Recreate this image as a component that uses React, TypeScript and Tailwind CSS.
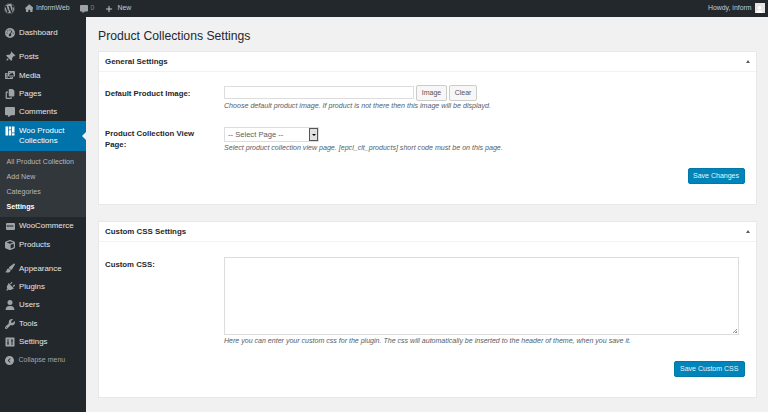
import type { ReactNode } from "react";
import {
  FaWordpress,
  FaHouse,
  FaMessage,
  FaPlus,
  FaGaugeHigh,
  FaThumbtack,
  FaPhotoFilm,
  FaCopy,
  FaCube,
  FaPaintbrush,
  FaPlug,
  FaUser,
  FaWrench,
  FaCircleChevronLeft,
} from "react-icons/fa6";

const MenuItem = ({ icon, label }: { icon: ReactNode; label: string }) => (
  <div className="flex h-[18.4px] items-center text-[7.9px] text-[#e4e5e6]">
    <span className="flex w-[19px] shrink-0 justify-center pl-[1px] text-[10px] text-[#9ea3a8]">{icon}</span>
    <span>{label}</span>
  </div>
);

const SubItem = ({ label, active }: { label: string; active?: boolean }) => (
  <div className={`flex h-[15px] items-center pl-[6.5px] text-[7.1px] ${active ? "font-bold text-white" : "text-[#b4b9be]"}`}>
    {label}
  </div>
);

const CardHeader = ({ title }: { title: string }) => (
  <div className="flex h-[20px] items-center justify-between border-b border-[#f2f2f2] pl-[6px] pr-[6px]">
    <h2 className="text-[7.9px] font-bold text-[#23282d]">{title}</h2>
    <span className="h-0 w-0 border-x-[2.5px] border-b-[3px] border-x-transparent border-b-[#555d66]" />
  </div>
);

const WooIcon = () => (
  <svg viewBox="0 0 20 20" className="h-[10px] w-[10px]" fill="currentColor">
    <path d="M1 1h5v18H1zM7.5 1h5v6h-5zM14 1h5v12h-5zM7.5 8.5h5V19h-5zM14 14.5h5V19h-5z" />
  </svg>
);

const SettingsIcon = () => (
  <svg viewBox="0 0 20 20" className="h-[10px] w-[10px]">
    <rect x="1" y="1" width="18" height="18" rx="1" fill="#9ea3a8" />
    <path d="M6 4v12M14 4v12M4 12h4M12 8h4" stroke="#23282d" strokeWidth="1.8" />
  </svg>
);

const Sidebar = () => (
  <aside className="flex w-[86px] shrink-0 flex-col bg-[#23282d] pt-[7px]">
    <MenuItem icon={<FaGaugeHigh />} label="Dashboard" />
    <div className="h-[5.5px]" />
    <MenuItem icon={<FaThumbtack className="rotate-45" />} label="Posts" />
    <MenuItem icon={<FaPhotoFilm />} label="Media" />
    <MenuItem icon={<FaCopy />} label="Pages" />
    <MenuItem icon={<FaMessage />} label="Comments" />
    <div className="relative flex h-[29.5px] items-start bg-[#0073aa] pt-[5px] text-[7.9px] leading-[9.6px] text-white">
      <span className="flex w-[19px] shrink-0 justify-center pl-[1px]">
        <WooIcon />
      </span>
      <span>
        Woo Product
        <br />
        Collections
      </span>
      <span className="absolute right-0 top-[11px] h-0 w-0 border-y-[4px] border-r-[4px] border-y-transparent border-r-[#f1f1f1]" />
    </div>
    <div className="flex h-[66px] flex-col bg-[#32373c] pt-[3.5px]">
      <SubItem label="All Product Collection" />
      <SubItem label="Add New" />
      <SubItem label="Categories" />
      <SubItem label="Settings" active />
    </div>
    <MenuItem
      icon={<span className="rounded-[1px] bg-[#9ea3a8] px-[1px] text-[3.5px] font-bold leading-[7px] text-[#23282d]">woo</span>}
      label="WooCommerce"
    />
    <MenuItem icon={<FaCube />} label="Products" />
    <div className="h-[5.5px]" />
    <MenuItem icon={<FaPaintbrush />} label="Appearance" />
    <MenuItem icon={<FaPlug className="rotate-45" />} label="Plugins" />
    <MenuItem icon={<FaUser />} label="Users" />
    <MenuItem icon={<FaWrench />} label="Tools" />
    <MenuItem icon={<SettingsIcon />} label="Settings" />
    <div className="flex h-[18.4px] items-center text-[7px] text-[#a0a5aa]">
      <span className="flex w-[18.5px] shrink-0 justify-center pl-[1px] text-[9px] text-[#a0a5aa]">
        <FaCircleChevronLeft />
      </span>
      <span>Collapse menu</span>
    </div>
  </aside>
);

const TopBar = () => (
  <header className="flex h-[17px] shrink-0 items-center justify-between bg-[#23282d] pl-[3.5px] pr-[3.5px] text-[6.9px] text-[#c5c9cd]">
    <div className="flex items-center">
      <FaWordpress className="text-[11px] text-[#9ea3a8]" />
      <FaHouse className="ml-[10px] text-[8.5px] text-[#9ea3a8]" />
      <span className="ml-[3px]">InformWeb</span>
      <FaMessage className="ml-[10px] text-[8px] text-[#9ea3a8]" />
      <span className="ml-[3px] text-[#80858a]">0</span>
      <FaPlus className="ml-[11px] text-[8px] text-[#c5c9cd]" />
      <span className="ml-[4px]">New</span>
    </div>
    <div className="flex items-center">
      <span>Howdy, inform</span>
      <span className="ml-[3px] flex h-[10px] w-[10px] items-end justify-center overflow-hidden bg-[#e4e4e4] text-[7px] text-white">
        <FaUser />
      </span>
    </div>
  </header>
);

export default function App() {
  return (
    <div
      className="flex h-[412px] w-[768px] flex-col overflow-hidden bg-[#f1f1f1]"
      style={{ fontFamily: '"Liberation Sans", Arial, sans-serif' }}
    >
      <TopBar />
      <div className="flex min-h-0 flex-1">
        <Sidebar />
        <main className="flex-1 pl-[12px] pr-[11px]">
          <h1 className="flex h-[34px] items-center pt-[4px] text-[12.2px] text-[#23282d]">Product Collections Settings</h1>

          <section className="h-[154px] border border-[#e8e8e8] bg-white">
            <CardHeader title="General Settings" />
            <div className="flex flex-col pl-[6px] pr-[11.5px] pt-[14px]">
              <div className="flex">
                <div className="w-[119px] shrink-0 pt-[2px] text-[7.8px] font-bold text-[#23282d]">Default Product Image:</div>
                <div>
                  <div className="flex gap-[2px]">
                    <input className="h-[13px] w-[190px] border border-[#dddddd] bg-white" />
                    <button className="-mt-[1px] h-[16px] w-[31px] rounded-[2px] border border-[#cccccc] bg-[#f7f7f7] text-[7px] text-[#555555]">Image</button>
                    <button className="-mt-[1px] h-[16px] w-[28px] rounded-[2px] border border-[#cccccc] bg-[#f7f7f7] text-[7px] text-[#555555]">Clear</button>
                  </div>
                  <p className="-mt-[0.5px] text-[7.1px] italic text-[#555d66]">
                    Choose default product image. If product is not there then this image will be displayd.
                  </p>
                </div>
              </div>
              <div className="mt-[16px] flex">
                <div className="w-[119px] shrink-0 pr-[22px] pt-[2px] text-[7.8px] font-bold leading-[10.5px] text-[#23282d]">
                  Product Collection View Page:
                </div>
                <div>
                  <div className="flex h-[15px] w-[95px] items-center border border-[#dddddd] bg-white pl-[3px] text-[7.6px] text-[#555d66]">
                    <span className="flex-1">-- Select Page --</span>
                    <span className="flex h-full w-[9px] items-center justify-center border border-[#555555] bg-[#e1e1e1]">
                      <span className="h-0 w-0 border-x-[2px] border-t-[2.5px] border-x-transparent border-t-black" />
                    </span>
                  </div>
                  <p className="mt-[1px] text-[7.1px] italic text-[#555d66]">
                    Select product collection view page. [epcl_clt_products] short code must be on this page.
                  </p>
                </div>
              </div>
              <div className="mt-[14px] flex justify-end">
                <button className="h-[16px] w-[57px] rounded-[2px] border border-[#0079a8] bg-[#0085ba] text-[7px] text-[#e8f4f9]">
                  Save Changes
                </button>
              </div>
            </div>
          </section>

          <section className="mt-[16px] h-[177px] border border-[#e8e8e8] bg-white">
            <CardHeader title="Custom CSS Settings" />
            <div className="flex flex-col pl-[6px] pr-[11.5px] pt-[14.5px]">
              <div className="flex">
                <div className="w-[119px] shrink-0 pt-[2.5px] text-[7.8px] font-bold text-[#23282d]">Custom CSS:</div>
                <div className="flex-1">
                  <div className="relative h-[78px] w-[515px] border border-[#dddddd] bg-white">
                    <span className="absolute bottom-[1px] right-[1px] h-[4px] w-[4px] bg-[linear-gradient(135deg,transparent_50%,#999999_50%,#999999_60%,transparent_60%,transparent_75%,#999999_75%)]" />
                  </div>
                  <p className="mt-[1px] text-[7.05px] italic text-[#555d66]">
                    Here you can enter your custom css for the plugin. The css will automatically be inserted to the header of theme, when you save it.
                  </p>
                </div>
              </div>
              <div className="mt-[15px] flex justify-end">
                <button className="h-[16px] w-[70.5px] rounded-[2px] border border-[#0079a8] bg-[#0085ba] text-[7px] text-[#e8f4f9]">
                  Save Custom CSS
                </button>
              </div>
            </div>
          </section>
        </main>
      </div>
    </div>
  );
}
